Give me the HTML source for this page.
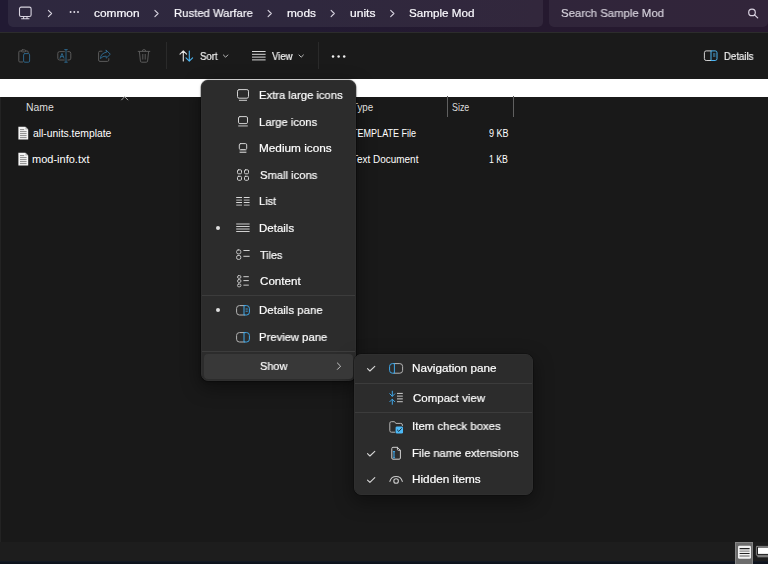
<!DOCTYPE html>
<html><head><meta charset="utf-8"><title>Sample Mod</title>
<style>
html,body{margin:0;padding:0}
body{width:768px;height:564px;overflow:hidden;background:#191919;position:relative;font-family:"Liberation Sans",sans-serif}
div,span,svg{position:absolute;box-sizing:border-box}
.g{will-change:transform;-webkit-text-stroke:.2px}
.t{white-space:pre;line-height:20px;height:20px;transform-origin:0 0}
#title{left:0;top:0;width:768px;height:32px;background:linear-gradient(90deg,#211a33 0%,#221a32 40%,#25192f 70%,#27192f 100%)}
#addr{left:7.5px;top:-8px;width:535px;height:34.5px;border-radius:5px;background:rgba(255,255,255,.062)}
#search{left:549px;top:-8px;width:219px;height:34.5px;border-radius:5px;background:rgba(255,255,255,.055)}
#tline{left:0;top:32px;width:768px;height:1px;background:#2c2c2c}
#toolbar{left:0;top:33px;width:768px;height:46px;background:#1a1a1a}
#white{left:0;top:79px;width:768px;height:17.6px;background:#fff}
#content{left:0;top:96px;width:768px;height:446px;background:#191919}
#status{left:0;top:542px;width:768px;height:19px;background:#1d1d1d}
#bottom{left:0;top:560.6px;width:768px;height:3.4px;background:linear-gradient(#151b27,#0d121b 60%)}
#lstrip{left:0;top:97px;width:1.2px;height:445px;background:#232323}
.vsep{width:1px;background:#2a2a2a}
.csep{width:1px;background:#606060}
#menu{left:200.7px;top:80px;width:155.5px;height:300.8px;border-radius:7px;background:#2c2c2c;border:1px solid #2f2f2f;box-shadow:0 0 0 .6px rgba(0,0,0,.35),0 1px 3px rgba(0,0,0,.25)}
#msh{left:200.7px;top:80px;width:155.5px;height:300.8px;border-radius:7px;box-shadow:0 6px 18px 2px rgba(0,0,0,.36)}
#sub{left:354px;top:354px;width:178.5px;height:140.8px;border-radius:7px;background:#2c2c2c;border:1px solid #2f2f2f;box-shadow:0 0 0 .6px rgba(0,0,0,.35),0 6px 18px 2px rgba(0,0,0,.36)}
.msep{height:1px;background:#3c3c3c}
#hl{left:204px;top:354px;width:149px;height:25px;border-radius:4px;background:#383838}
.dot{width:4px;height:4px;border-radius:2px;background:#e0e0e0}
svg{overflow:visible}
</style></head><body>
<div id="title"></div><div id="addr"></div><div id="search"></div>
<div id="tline"></div><div id="toolbar"></div>
<div id="content"></div><div id="status"></div><div id="lstrip"></div><div id="bottom"></div><div id="msh"></div><div id="white"></div>
<div class="vsep" style="left:166px;top:42.4px;height:26.4px"></div>
<div class="vsep" style="left:318px;top:42.4px;height:26.4px"></div>
<div class="csep" style="left:447px;top:96px;height:21px"></div>
<div class="csep" style="left:513px;top:96px;height:21px"></div>
<div id="vb1" style="left:735px;top:542px;width:18px;height:23px;background:#6c6c6c;border:1px solid #858585"></div>
<svg width="768" height="564" viewBox="0 0 768 564" style="left:0;top:0" fill="none" stroke-linecap="round" stroke-linejoin="round">
<!-- address bar: monitor -->
<g stroke="#d8d4e0" stroke-width="1.1">
<rect x="19.5" y="7.1" width="11.6" height="9.4" rx="1.6"/>
<path d="M23.6 16.6V18.6M27 16.6V18.6M21.6 18.7H29"/>
<!-- chevrons -->
<path d="M48.4 10.4L51.6 13.5L48.4 16.6"/>
<path d="M154.9 10.4L158.1 13.5L154.9 16.6"/>
<path d="M268.1 10.4L271.3 13.5L268.1 16.6"/>
<path d="M331.1 10.4L334.3 13.5L331.1 16.6"/>
<path d="M390.7 10.4L393.9 13.5L390.7 16.6"/>
</g>
<g fill="#e4e0ea"><circle cx="70.6" cy="12" r=".95"/><circle cx="74.3" cy="12" r=".95"/><circle cx="78" cy="12" r=".95"/></g>
<!-- search icon -->
<g stroke="#d9d2e0" stroke-width="1.2"><circle cx="752" cy="12.4" r="3.3"/><path d="M754.5 14.9L757.7 17.9"/></g>
<!-- toolbar: paste -->
<g stroke="#5a5a5a" stroke-width="1">
<path d="M22.6 62H19.9Q18.8 62 18.8 60.9V52.1Q18.8 51 19.9 51H21.4M25.6 51H27.1Q28.2 51 28.2 52.1V53"/>
<rect x="21.4" y="49.9" width="4.2" height="2" rx="1"/>
</g>
<rect x="23.6" y="53.6" width="6" height="8.6" rx="1.2" stroke="#2d6487" stroke-width="1"/>
<!-- rename -->
<path d="M64.4 51.6H59.6Q57.8 51.6 57.8 53.4V58.2Q57.8 60 59.6 60H64.4M67.8 51.6H69Q70.8 51.6 70.8 53.4V58.2Q70.8 60 69 60H67.8" stroke="#5a5a5a" stroke-width="1"/>
<g stroke="#2d6487" stroke-width="1"><path d="M66 49.8V62M64.7 49.6H67.3M64.7 62.2H67.3"/><path d="M60 58.2L62 53.4L64 58.2M60.7 56.6H63.3"/></g>
<!-- share -->
<path d="M102 51.2H100Q98.6 51.2 98.6 52.6V60Q98.6 61.4 100 61.4H107.4Q108.8 61.4 108.8 60V58.6" stroke="#5a5a5a" stroke-width="1"/>
<path d="M106.2 50.2L110.3 54.2L106.2 58.2V56.1Q102.6 55.9 100.4 58.6Q100.8 53.1 106.2 52.3Z" stroke="#2d6487" stroke-width="1"/>
<!-- trash -->
<g stroke="#5a5a5a" stroke-width="1"><path d="M138.2 51.4H149.8M142.2 51.2Q142.2 49.6 144 49.6Q145.8 49.6 145.8 51.2M139.4 51.6L140.4 61Q140.5 62.2 141.7 62.2H146.3Q147.5 62.2 147.6 61L148.6 51.6M142.8 54.4V59.2M145.2 54.4V59.2"/></g>
<!-- sort -->
<g stroke-width="1.1"><path d="M183.3 61V51M180 54.2L183.3 50.9L186.6 54.2" stroke="#e4e4e4"/><path d="M189.3 51V61M186 57.8L189.3 61.1L192.6 57.8" stroke="#4cb4f0"/></g>
<g stroke="#bdbdbd" stroke-width="1"><path d="M223.4 55L225.6 57.2L227.8 55"/><path d="M299 55L301.2 57.2L303.4 55"/></g>
<!-- view icon -->
<g stroke="#d8d8d8" stroke-width="1" stroke-linecap="butt"><path d="M252 51.5H265.6M252 54.3H265.6M252 57.1H265.6M252 59.9H265.6"/></g>
<g fill="#f0f0f0"><circle cx="333" cy="56.5" r="1.25"/><circle cx="338.6" cy="56.5" r="1.25"/><circle cx="344.2" cy="56.5" r="1.25"/></g>
<!-- details button icon -->
<path d="M711 50.9H706.2Q704.4 50.9 704.4 52.7V58.7Q704.4 60.5 706.2 60.5H711" stroke="#d0d0d0" stroke-width="1"/>
<path d="M711.4 50.9H715.2Q717 50.9 717 52.7V58.7Q717 60.5 715.2 60.5H711.4Z" stroke="#4cb4f0" stroke-width="1"/>
<path d="M713.4 54H715M713.4 56H715" stroke="#4cb4f0" stroke-width=".9"/>
<!-- header sort arrow -->
<path d="M121.6 99.9L124.7 96.6L127.8 99.9" stroke="#a8a8a8" stroke-width="1"/>
<!-- file icons -->
<g id="fi">
<path d="M18.4 126.8H25.4L28.2 129.6V139.6H18.4Z" fill="#f4f4f4" stroke="none"/>
<path d="M25.4 126.8V129.6H28.2Z" fill="#b8b8b8"/>
<path d="M20 129.6H24.2M20 131.6H26.6M20 133.6H26.6M20 135.6H26.6M20 137.6H26.6" stroke="#8c8c8c" stroke-width="1" stroke-linecap="butt"/>
</g>
<use href="#fi" y="26"/>
<!-- status bar view buttons -->
<rect x="738" y="545.8" width="13" height="13" rx="1.4" fill="#f2f2f2"/>
<path d="M739.6 548.6H749.6M739.6 553.5H749.6" stroke="#222" stroke-width="1.1" stroke-linecap="butt"/>
<path d="M739.6 551.1H749.6M739.6 556H749.6" stroke="#8e8e8e" stroke-width="1.3" stroke-linecap="butt"/>
<rect x="756.4" y="546.4" width="14" height="9" rx=".6" fill="#222" stroke="#8e8e8e" stroke-width=".9"/>
<rect x="758" y="547.6" width="12" height="6.3" fill="#fff"/>
<path d="M757.4 556.7H770" stroke="#8a8a8a" stroke-width="1.2" stroke-linecap="butt"/>
</svg>
<span class="t g" style="left:94.23px;top:3.10px;font-size:11.5px;color:#fbfaff;transform:scaleX(1.0339)">common</span>
<span class="t g" style="left:173.67px;top:3.10px;font-size:11.5px;color:#fbfaff;transform:scaleX(0.9834)">Rusted Warfare</span>
<span class="t g" style="left:287.18px;top:3.10px;font-size:11.5px;color:#fbfaff;transform:scaleX(1.0296)">mods</span>
<span class="t g" style="left:349.76px;top:3.10px;font-size:11.5px;color:#fbfaff;transform:scaleX(1.0495)">units</span>
<span class="t g" style="left:409.34px;top:3.10px;font-size:11.5px;color:#fbfaff;transform:scaleX(1.0150)">Sample Mod</span>
<span class="t g" style="left:561.36px;top:3.10px;font-size:11.5px;color:#d6d2dc;transform:scaleX(0.9883)">Search Sample Mod</span>
<span class="t g" style="left:199.69px;top:46.44px;font-size:10.5px;color:#f4f4f4;transform:scaleX(0.9173)">Sort</span>
<span class="t g" style="left:272.45px;top:46.44px;font-size:10.5px;color:#f4f4f4;transform:scaleX(0.9067)">View</span>
<span class="t g" style="left:723.86px;top:46.44px;font-size:10.5px;color:#f4f4f4;transform:scaleX(0.9194)">Details</span>
<span class="t" style="left:26.06px;top:97.44px;font-size:10.5px;color:#dedede;transform:scaleX(0.9907)">Name</span>
<span class="t" style="left:352.27px;top:97.44px;font-size:10.5px;color:#dedede;transform:scaleX(0.9318)">Type</span>
<span class="t" style="left:452.38px;top:97.44px;font-size:10.5px;color:#dedede;transform:scaleX(0.8462)">Size</span>
<span class="t" style="left:32.78px;top:123.61px;font-size:10px;color:#ffffff;transform:scaleX(1.0368)">all-units.template</span>
<span class="t" style="left:32.47px;top:149.62px;font-size:10px;color:#ffffff;transform:scaleX(1.1010)">mod-info.txt</span>
<span class="t" style="left:352.27px;top:123.61px;font-size:10px;color:#ffffff;transform:scaleX(0.9039)">TEMPLATE File</span>
<span class="t" style="left:352.25px;top:149.62px;font-size:10px;color:#ffffff;transform:scaleX(0.9955)">Text Document</span>
<span class="t" style="left:488.55px;top:123.61px;font-size:10px;color:#ffffff;transform:scaleX(0.9012)">9 KB</span>
<span class="t" style="left:489.15px;top:149.62px;font-size:10px;color:#ffffff;transform:scaleX(0.8732)">1 KB</span>
<div id="menu"></div>
<div id="sub"></div>
<div id="hl"></div>
<div class="msep" style="left:202px;top:295px;width:153px"></div>
<div class="msep" style="left:202px;top:351px;width:153px"></div>
<div class="msep" style="left:355px;top:383px;width:177px"></div>
<div class="msep" style="left:355px;top:412px;width:177px"></div>
<div class="dot" style="left:215.8px;top:225.8px"></div>
<div class="dot" style="left:215.8px;top:308.3px"></div>
<svg width="768" height="564" viewBox="0 0 768 564" style="left:0;top:0" fill="none" stroke-linecap="round" stroke-linejoin="round">
<g stroke="#d2d2d2" stroke-width="1">
<!-- extra large -->
<rect x="237.5" y="89.6" width="11" height="8.6" rx="1.6"/><path d="M239.4 100.3H246.6"/>
<!-- large -->
<rect x="238.5" y="116.6" width="9" height="7" rx="1.4"/>
<!-- medium -->
<rect x="239.3" y="143.6" width="7.4" height="6" rx="1.3"/>
<path d="M240 152.3H246"/>
<!-- small -->
<rect x="237.5" y="169.8" width="4" height="4" rx="1.1"/><rect x="244.5" y="169.8" width="4" height="4" rx="1.1"/>
<rect x="237.5" y="176.3" width="4" height="4" rx="1.1"/><rect x="244.5" y="176.3" width="4" height="4" rx="1.1"/>
</g>
<path d="M238.2 125.9H247.8" stroke="#9a9a9a" stroke-width="1.4" stroke-linecap="butt"/>
<path d="M239.6 150.9H246.4" stroke="#8a8a8a" stroke-width="1" stroke-linecap="butt"/>
<!-- list -->
<g stroke-linecap="butt">
<path d="M236.2 197.5H242M243.8 197.5H249.6M236.2 202.5H242M243.8 202.5H249.6" stroke="#dadada" stroke-width="1"/>
<path d="M236.2 200.1H242M243.8 200.1H249.6M236.2 205.1H242M243.8 205.1H249.6" stroke="#9c9c9c" stroke-width="1.4"/>
<!-- details -->
<path d="M236.2 224H249.6M236.2 226.5H249.6M236.2 229H249.6M236.2 231.5H249.6" stroke="#cfcfcf" stroke-width="1"/>
<!-- tiles -->
<path d="M243.4 250.5H249.6M243.4 256.3H249.6" stroke="#d2d2d2" stroke-width="1"/>
<!-- content -->
<path d="M243.4 276.7H248.8M243.4 280.6H248.8" stroke="#d2d2d2" stroke-width="1"/>
<path d="M243.4 285.2H248.8" stroke="#9c9c9c" stroke-width="1.4"/>
</g>
<g stroke="#c4c4c4" stroke-width="1">
<rect x="236.6" y="249.9" width="4.2" height="4" rx="1.6"/><rect x="236.6" y="255.4" width="4.2" height="4" rx="1.6"/>
<rect x="237.5" y="275.6" width="3.4" height="2.7" rx="1.2"/><rect x="237.5" y="279.6" width="3.4" height="2.8" rx="1.2"/><rect x="237.5" y="284" width="3.4" height="2.8" rx="1.2"/>
</g>
<!-- details pane -->
<path d="M244.4 305.6H239.4Q236.6 305.6 236.6 308.4V312.2Q236.6 315 239.4 315H244.4" stroke="#b4b4b4" stroke-width="1"/>
<path d="M244.4 305.6H246.6Q249.4 305.6 249.4 308.4V312.2Q249.4 315 246.6 315H244.4Z" stroke="#3fa7e8" stroke-width="1"/>
<path d="M246 309H247.4M246 311.2H247.4" stroke="#3fa7e8" stroke-width=".9"/>
<!-- preview pane -->
<path d="M244.4 332.6H239.4Q236.6 332.6 236.6 335.4V339.2Q236.6 342 239.4 342H244.4" stroke="#b4b4b4" stroke-width="1"/>
<path d="M244.4 332.6H246.6Q249.4 332.6 249.4 335.4V339.2Q249.4 342 246.6 342H244.4Z" stroke="#3fa7e8" stroke-width="1"/>
<!-- show chevron -->
<path d="M337.4 363L340.6 366.2L337.4 369.4" stroke="#c8c8c8" stroke-width="1"/>
<!-- checks -->
<g stroke="#d6d6d6" stroke-width="1.1">
<path d="M367.5 368.7L369.9 371L374.8 366.3"/>
<path d="M367.5 453.7L369.9 456L374.8 451.3"/>
<path d="M367.5 480.1L369.9 482.4L374.8 477.7"/>
</g>
<!-- navigation pane -->
<path d="M394 363.6H399.8Q402.6 363.6 402.6 366.4V370.4Q402.6 373.2 399.8 373.2H394" stroke="#b4b4b4" stroke-width="1"/>
<path d="M394 363.6H392.4Q389.6 363.6 389.6 366.4V370.4Q389.6 373.2 392.4 373.2H394Z" stroke="#3fa7e8" stroke-width="1"/>
<!-- compact view -->
<g stroke="#3fa7e8" stroke-width="1"><path d="M392.3 391.2V396.2M389.8 393.8L392.3 396.3L394.8 393.8M392.3 404.3V399.3M389.8 401.7L392.3 399.2L394.8 401.7"/></g>
<g stroke-linecap="butt"><path d="M397 393.4H402.8M397 398.9H402.8" stroke="#d2d2d2" stroke-width="1"/><path d="M397 396.1H402.8M397 401.7H402.8" stroke="#a8a8a8" stroke-width="1.2"/></g>
<!-- item check boxes -->
<path d="M394.6 432.2H391.4Q389.8 432.2 389.8 430.6V423.2Q389.8 421.7 391.4 421.7H394Q395 421.7 395.4 422.6L395.8 423.4H400.8Q402.4 423.4 402.4 425V425.6" stroke="#b4b4b4" stroke-width="1"/>
<rect x="395.6" y="426.4" width="7.4" height="7.2" rx="1.4" fill="#4cb8f5"/>
<path d="M397.4 430L398.8 431.4L401.4 428.6" stroke="#1c2a33" stroke-width="1"/>
<!-- file name ext -->
<path d="M397.4 447.3H393Q391.8 447.3 391.8 448.5V458Q391.8 459.2 393 459.2H399.2Q400.4 459.2 400.4 458V450.3L397.4 447.3V449.4Q397.4 450.3 398.3 450.3H400.2" stroke="#d2d2d2" stroke-width="1"/>
<path d="M394 451.8V457.6M393.4 451.6H394.6M393.4 457.8H394.6" stroke="#3fa7e8" stroke-width="1.1"/>
<!-- eye -->
<path d="M389.9 481.4Q391.2 476.5 396.1 476.5Q401 476.5 402.3 481.4" stroke="#cacaca" stroke-width="1.1"/>
<circle cx="396.1" cy="481" r="2.3" stroke="#cacaca" stroke-width="1.1"/>
</svg>

<span class="t g" style="left:259.37px;top:85.10px;font-size:11.5px;color:#ffffff;transform:scaleX(0.9769)">Extra large icons</span>
<span class="t g" style="left:259.37px;top:112.10px;font-size:11.5px;color:#ffffff;transform:scaleX(0.9776)">Large icons</span>
<span class="t g" style="left:259.33px;top:138.10px;font-size:11.5px;color:#ffffff;transform:scaleX(1.0245)">Medium icons</span>
<span class="t g" style="left:259.86px;top:165.10px;font-size:11.5px;color:#ffffff;transform:scaleX(0.9741)">Small icons</span>
<span class="t g" style="left:259.39px;top:191.10px;font-size:11.5px;color:#ffffff;transform:scaleX(0.9552)">List</span>
<span class="t g" style="left:259.35px;top:218.10px;font-size:11.5px;color:#ffffff;transform:scaleX(0.9956)">Details</span>
<span class="t g" style="left:259.82px;top:245.10px;font-size:11.5px;color:#ffffff;transform:scaleX(0.9376)">Tiles</span>
<span class="t g" style="left:259.65px;top:271.10px;font-size:11.5px;color:#ffffff;transform:scaleX(1.0088)">Content</span>
<span class="t g" style="left:259.35px;top:300.10px;font-size:11.5px;color:#ffffff;transform:scaleX(0.9952)">Details pane</span>
<span class="t g" style="left:259.37px;top:327.10px;font-size:11.5px;color:#ffffff;transform:scaleX(0.9788)">Preview pane</span>
<span class="t g" style="left:259.87px;top:356.10px;font-size:11.5px;color:#ffffff;transform:scaleX(0.9522)">Show</span>
<span class="t g" style="left:412.33px;top:358.10px;font-size:11.5px;color:#ffffff;transform:scaleX(1.0177)">Navigation pane</span>
<span class="t g" style="left:412.55px;top:388.10px;font-size:11.5px;color:#ffffff;transform:scaleX(0.9965)">Compact view</span>
<span class="t g" style="left:412.36px;top:416.10px;font-size:11.5px;color:#ffffff;transform:scaleX(0.9920)">Item check boxes</span>
<span class="t g" style="left:412.37px;top:443.10px;font-size:11.5px;color:#ffffff;transform:scaleX(0.9809)">File name extensions</span>
<span class="t g" style="left:412.33px;top:469.10px;font-size:11.5px;color:#ffffff;transform:scaleX(1.0236)">Hidden items</span>
</body></html>
